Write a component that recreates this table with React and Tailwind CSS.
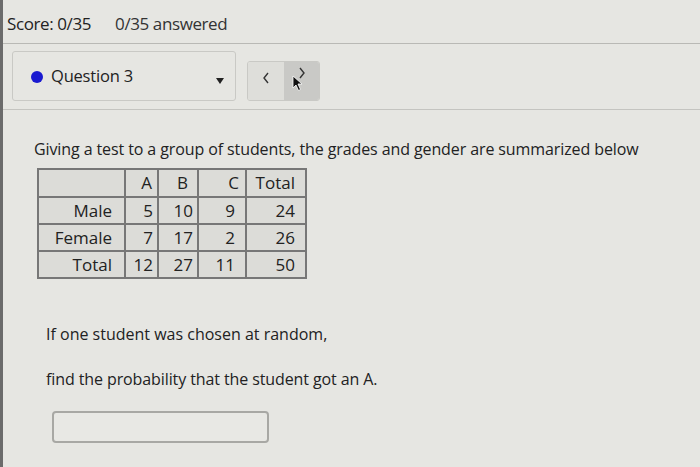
export default function App() {
  const font = { fontFamily: '"Open Sans", "Liberation Sans", sans-serif' };
  const rows = [
    ["Male", "5", "10", "9", "24"],
    ["Female", "7", "17", "2", "26"],
    ["Total", "12", "27", "11", "50"],
  ];
  return (
    <div className="relative w-[700px] h-[467px] overflow-hidden bg-[#e6e6e2] text-[#222]" style={font}>
      <div className="absolute left-0 top-0 bottom-0 w-[3px] bg-[#6b6b6b]" />
      <div className="flex items-baseline gap-[24px] pl-[7px] pt-[11px] h-[44px] border-b border-[#b9b9b5]">
        <span className="text-[17px] tracking-[-0.4px]">Score: 0/35</span>
        <span className="text-[17px] tracking-[-0.4px] text-[#333]">0/35 answered</span>
      </div>
      <div className="flex items-center gap-[11px] pl-[12px] pt-[6px] pb-[8px] border-b border-[#c4c4c0]">
        <div className="w-[224px] h-[50px] border border-[#c9c9c5] rounded-[3px] flex items-center pl-[18px] pr-[11px] pt-[2px]">
          <span className="w-[12px] h-[12px] rounded-full bg-[#1a1ad0]" />
          <span className="ml-[8px] text-[16.5px] tracking-[-0.2px]">Question 3</span>
          <span className="ml-auto mt-[8px] w-0 h-0 border-l-[4px] border-r-[4px] border-t-[6px] border-l-transparent border-r-transparent border-t-[#222]" />
        </div>
        <div className="flex mt-[11px] h-[40px] w-[73px] rounded-[3px] border border-[#c9c9c5] overflow-hidden">
          <div className="w-[36px] flex items-center justify-center bg-[#dededa]">
            <svg width="8" height="12" viewBox="0 0 8 12" className="-mt-[6px]">
              <path d="M6 1 L2 6 L6 11" fill="none" stroke="#333" strokeWidth="1.4" />
            </svg>
          </div>
          <div className="flex-1 relative bg-[#c9c9c6]">
            <svg className="absolute left-[14px] top-[5px]" width="8" height="12" viewBox="0 0 8 12">
              <path d="M2 1 L6 6 L2 11" fill="none" stroke="#333" strokeWidth="1.4" />
            </svg>
            <svg className="absolute left-[8px] top-[13px]" width="12" height="17" viewBox="0 0 12 17">
              <path d="M1 1 L1 13 L4 10 L6.5 15.5 L8.5 14.5 L6 9 L10 9 Z" fill="#111" stroke="#fff" strokeWidth="0.8" />
            </svg>
          </div>
        </div>
      </div>
      <div className="pl-[34px] pt-[28px] text-[16px] tracking-[-0.1px] leading-[22px]">
        Giving a test to a group of students, the grades and gender are summarized below
      </div>
      <div className="pl-[37px] pt-[8px]">
        <table className="border-collapse bg-[#dcdcd8] text-[17px] leading-[18px]">
          <thead>
            <tr className="h-[28px]">
              <th className="w-[87px] border-2 border-[#777] font-normal" />
              <th className="w-[33px] border-2 border-[#777] font-normal text-right pr-[5px]">A</th>
              <th className="w-[40px] border-2 border-[#777] font-normal text-right pr-[9px]">B</th>
              <th className="w-[48px] border-2 border-[#777] font-normal text-right pr-[6px]">C</th>
              <th className="w-[60px] border-2 border-[#777] font-normal text-right pr-[10px]">Total</th>
            </tr>
          </thead>
          <tbody>
            {rows.map((r) => (
              <tr key={r[0]} className="h-[27px]">
                <td className="border-2 border-[#777] text-right pr-[12px]">{r[0]}</td>
                <td className="border-2 border-[#777] text-right pr-[4px]">{r[1]}</td>
                <td className="border-2 border-[#777] text-right pr-[4px]">{r[2]}</td>
                <td className="border-2 border-[#777] text-right pr-[10px]">{r[3]}</td>
                <td className="border-2 border-[#777] text-right pr-[10px]">{r[4]}</td>
              </tr>
            ))}
          </tbody>
        </table>
      </div>
      <div className="pl-[46px] pt-[44px] text-[16px] leading-[22px]">If one student was chosen at random,</div>
      <div className="pl-[46px] pt-[23px] text-[16px] tracking-[-0.1px] leading-[22px]">find the probability that the student got an A.</div>
      <div className="ml-[52px] mt-[21px] w-[217px] h-[32px] border-2 border-[#a8a8a4] rounded-[4px] bg-[#e8e8e4]" />
    </div>
  );
}
